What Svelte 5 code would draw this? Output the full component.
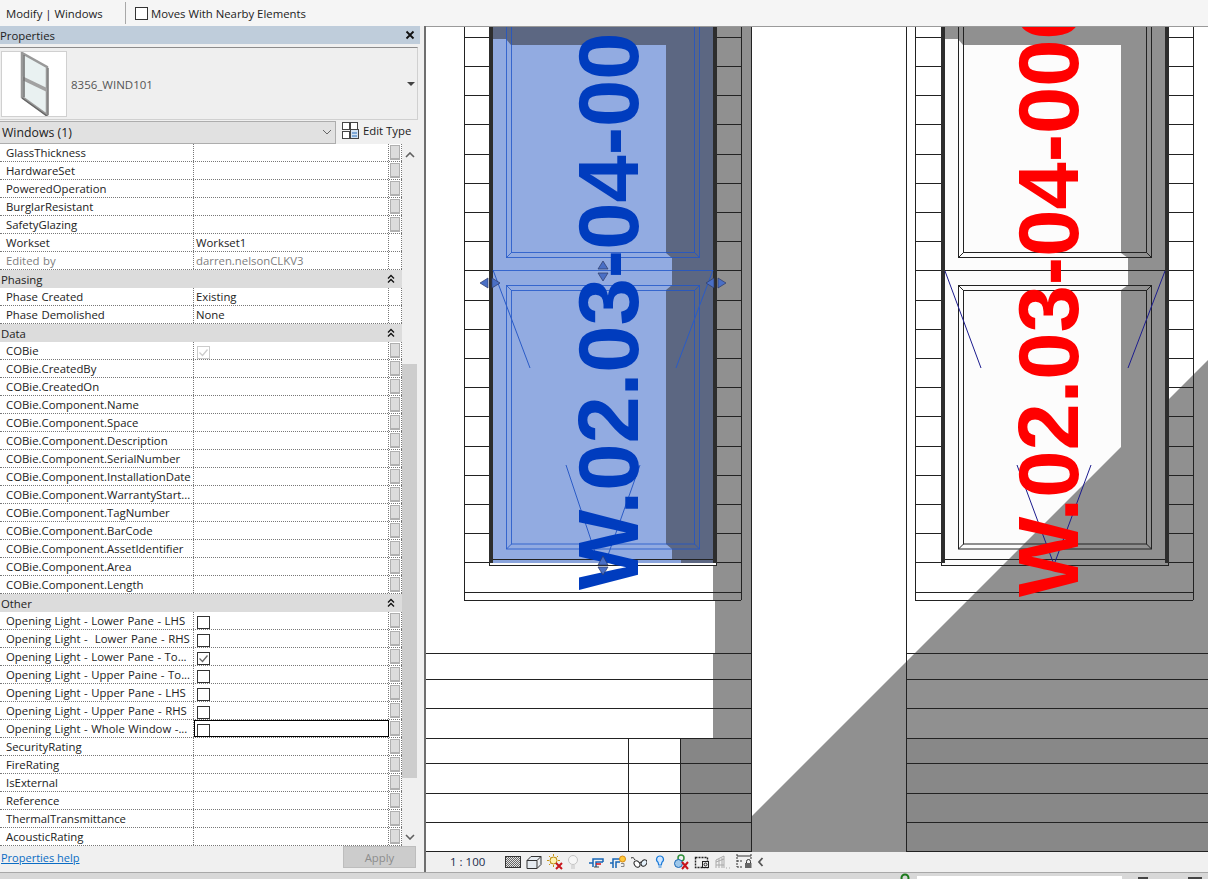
<script>
  const headers = (label) => ({ kind: 'header', label });
  const btn = (label, extra = {}) => ({ kind: 'row', label, btn: true, ...extra });
  const plain = (label, value, muted = false) => ({ kind: 'row', label, value, muted });

  const rows = [
    btn('GlassThickness'),
    btn('HardwareSet'),
    btn('PoweredOperation'),
    btn('BurglarResistant'),
    btn('SafetyGlazing'),
    plain('Workset', 'Workset1'),
    plain('Edited by', 'darren.nelsonCLKV3', true),
    headers('Phasing'),
    plain('Phase Created', 'Existing'),
    plain('Phase Demolished', 'None'),
    headers('Data'),
    btn('COBie', { check: 'disabled' }),
    btn('COBie.CreatedBy'),
    btn('COBie.CreatedOn'),
    btn('COBie.Component.Name'),
    btn('COBie.Component.Space'),
    btn('COBie.Component.Description'),
    btn('COBie.Component.SerialNumber'),
    btn('COBie.Component.InstallationDate'),
    btn('COBie.Component.WarrantyStart...'),
    btn('COBie.Component.TagNumber'),
    btn('COBie.Component.BarCode'),
    btn('COBie.Component.AssetIdentifier'),
    btn('COBie.Component.Area'),
    btn('COBie.Component.Length'),
    headers('Other'),
    btn('Opening Light - Lower Pane - LHS', { check: 'off' }),
    btn('Opening Light -  Lower Pane - RHS', { check: 'off' }),
    btn('Opening Light - Lower Pane - To...', { check: 'on' }),
    btn('Opening Light - Upper Paine - To...', { check: 'off' }),
    btn('Opening Light - Upper Pane - LHS', { check: 'off' }),
    btn('Opening Light - Upper Pane - RHS', { check: 'off' }),
    btn('Opening Light - Whole Window -...', { check: 'off', active: true }),
    btn('SecurityRating'),
    btn('FireRating'),
    btn('IsExternal'),
    btn('Reference'),
    btn('ThermalTransmittance'),
    btn('AcousticRating')
  ];

  const courses = [37, 66, 95, 124, 154, 183, 212, 241, 270, 300, 329, 358, 387, 416, 446, 475, 504, 533, 562];
  const wallLines = [653, 679, 708, 738, 763, 793, 822, 851];

  const leftWin = {
    wall: [464, 741], frame: [489, 713], dx: 0, shade: [666, 672],
    glass: '#92abe1', dark: '#5c6782', line: '#1f55c8', lineOpacity: 0.8,
    sillFill: '#8aa4dc', sillShade: 681
  };
  const rightWin = {
    wall: [915, 1193], frame: [941, 1165], dx: 452, shade: [1121, 1128],
    glass: '#fcfcfc', dark: '#909090', line: '#222', lineOpacity: 1,
    sillFill: '#fcfcfc', sillShade: null
  };

  const lightShape = (w) => {
    const o = w.frame[0] + 4;
    const [a, b] = w.shade;
    return [[o, 39], [o + 13, 39], [o + 18, 45], [a, 45], [a, 253], [b, 258], [b, 285], [a, 290], [a, 544], [b, 549], [b, 559], [o, 559]]
      .map((p) => p.join(',')).join(' ');
  };
</script>

{#snippet windowFill(w)}
  <rect x={w.frame[0] + 4} y="0" width={w.frame[1] - w.frame[0] - 4} height="560" fill={w.dark} />
  <polygon points={lightShape(w)} fill={w.glass} />
  <rect x={w.frame[0] + 1} y="559" width={w.frame[1] - w.frame[0] + 2} height="7" fill="#fcfcfc" />
  <rect x={w.frame[0] + 2} y="559" width={w.frame[1] - w.frame[0]} height="4" fill={w.sillFill} />
  {#if w.sillShade}
    <rect x={w.sillShade} y="559" width={w.frame[1] + 2 - w.sillShade} height="4" fill={w.dark} />
  {/if}
{/snippet}

{#snippet windowInk(w)}
  <g class="ink">
    {#each courses as y}
      <line x1={w.wall[0]} x2={w.frame[0]} y1={y + 0.5} y2={y + 0.5} />
      <line x1={w.frame[1] + 4} x2={w.wall[1]} y1={y + 0.5} y2={y + 0.5} />
    {/each}
    <line x1={w.wall[0] + 0.5} x2={w.wall[0] + 0.5} y1="0" y2="600" />
    <line x1={w.wall[1] + 0.5} x2={w.wall[1] + 0.5} y1="0" y2="600" />
    <line x1={w.wall[0]} x2={w.wall[1]} y1="592.5" y2="592.5" />
    <line x1={w.wall[0]} x2={w.wall[1]} y1="600.5" y2="600.5" />
    <rect class="box" x={w.frame[0] + 0.5} y="559.5" width={w.frame[1] - w.frame[0] + 3} height="6" />
  </g>
  <rect x={w.frame[0]} y="0" width="4" height="563" fill="#2d2d2d" />
  <rect x={w.frame[1]} y="0" width="4" height="563" fill="#2d2d2d" />

  <g class="sash" style="stroke: {w.line}; stroke-opacity: {w.lineOpacity}">
    <line x1={w.frame[0] + 4} x2={w.frame[1]} y1="270.5" y2="270.5" />
    <rect x={506.5 + w.dx} y="-10" width="193" height="267.5" />
    <rect x={511.5 + w.dx} y="-10" width="183" height="262.5" />
    <rect x={506.5 + w.dx} y="285.5" width="193" height="263.5" />
    <rect x={511.5 + w.dx} y="290.5" width="183" height="253.5" />
    <path d="M{506.5 + w.dx} 257.5l5-5M{699.5 + w.dx} 257.5l-5-5M{506.5 + w.dx} 285.5l5 5M{699.5 + w.dx} 285.5l-5 5M{506.5 + w.dx} 549l5-5M{699.5 + w.dx} 549l-5-5" />
  </g>
{/snippet}

<div class="app">
  <header class="toolbar">
    <span class="mode">Modify | Windows</span>
    <span class="sep"></span>
    <span class="tool-check"></span>
    <span>Moves With Nearby Elements</span>
  </header>

  <div class="main">
    <aside class="panel">
      <div class="panel-body">
        <div class="title">
          <span>Properties</span>
          <svg width="10" height="10" viewBox="0 0 10 10"><path d="M1.5 1.5l7 7M8.5 1.5l-7 7" stroke="#111" stroke-width="1.8" /></svg>
        </div>
        <div class="type-box">
          <div class="thumb">
            <svg width="64" height="64" viewBox="0 0 64 64">
              <polygon points="20,1 45,15 45,63 20,45" fill="#e9f1f1" stroke="#999" stroke-width="2.5" />
              <polygon points="20,24 45,36 45,40 20,28" fill="#a2a2a2" />
              <path d="M22 3v42" stroke="#6e6e6e" stroke-width="1.5" />
              <path d="M46 16v47" stroke="#808080" stroke-width="1.5" />
              <path d="M20 46l25 18" stroke="#666" stroke-width="1.5" />
            </svg>
          </div>
          <span class="type-name">8356_WIND101</span>
          <span class="type-arrow"></span>
        </div>
        <div class="filter">
          <div class="select">
            <span>Windows (1)</span>
            <svg width="10" height="6" viewBox="0 0 10 6"><path d="M1 1l4 4 4-4" fill="none" stroke="#666" /></svg>
          </div>
          <div class="edit-type">
            <svg width="17" height="17" viewBox="0 0 17 17">
              <rect x="0.5" y="0.5" width="7" height="7" fill="#fff" stroke="#444" />
              <rect x="8.5" y="0.5" width="7" height="7" fill="#fff" stroke="#444" />
              <rect x="0.5" y="9.5" width="7" height="7" fill="#fff" stroke="#444" />
              <rect x="8.5" y="7.5" width="8" height="9" fill="#d5e4f3" stroke="#444" />
              <path d="M10 11h5M10 14h5" stroke="#2a6ebb" />
            </svg>
            <span>Edit Type</span>
          </div>
        </div>

        <div class="grid-wrap">
          <div class="grid">
            {#each rows as r}
              {#if r.kind === 'header'}
                <div class="group">
                  <span>{r.label}</span>
                  <svg width="8" height="10" viewBox="0 0 8 10"><path d="M1 4.5l3-3 3 3M1 8.5l3-3 3 3" fill="none" stroke="#111" stroke-width="1.3" /></svg>
                </div>
              {:else}
                <div class="row">
                  <div class="cell label" class:muted={r.muted}>{r.label}</div>
                  <div class="cell value" class:muted={r.muted} class:active={r.active}>
                    {#if r.check}
                      <span class="check {r.check}">
                        {#if r.check !== 'off'}
                          <svg width="11" height="11" viewBox="0 0 11 11"><path d="M1.5 5.5l3 3 5-6" fill="none" stroke={r.check === 'on' ? '#666' : '#ccc'} stroke-width="1.3" /></svg>
                        {/if}
                      </span>
                    {:else if r.value}{r.value}{/if}
                  </div>
                  <div class="cell more">
                    {#if r.btn}<span class="more-btn"></span>{/if}
                  </div>
                </div>
              {/if}
            {/each}
          </div>
          <div class="scrollbar">
            <svg class="arrow-up" width="10" height="6" viewBox="0 0 10 6"><path d="M1 5l4-4 4 4" fill="none" stroke="#606060" stroke-width="1.6" /></svg>
            <div class="scroll-thumb"></div>
            <svg class="arrow-down" width="10" height="6" viewBox="0 0 10 6"><path d="M1 1l4 4 4-4" fill="none" stroke="#606060" stroke-width="1.6" /></svg>
          </div>
        </div>

        <div class="panel-foot">
          <span class="help">Properties help</span>
          <span class="apply">Apply</span>
        </div>
      </div>
    </aside>

    <section class="view">
      <svg class="drawing" width="782" height="825" viewBox="426 27 782 825">
        <rect x="426" y="27" width="782" height="825" fill="#fff" />

        <!-- cast shadows -->
        <rect x="717" y="0" width="35" height="566" fill="#909090" />
        <polygon points="713,566 752,566 752,653 715,653 715,600 713,600" fill="#909090" />
        <rect x="713" y="653" width="39" height="85" fill="#909090" />
        <rect x="681" y="738" width="71" height="114" fill="#868686" />

        {@render windowFill(leftWin)}
        {@render windowFill(rightWin)}

        <!-- diagonal shadow falls across the right window -->
        <polygon points="1208,360 752,816 752,852 1208,852" fill="#909090" />
        <rect x="907" y="738" width="301" height="114" fill="#888888" />

        {@render windowInk(leftWin)}
        {@render windowInk(rightWin)}

        <g class="ink">
          {#each wallLines as y}
            <line x1="426" x2="752" y1={y + 0.5} y2={y + 0.5} />
            <line x1="907" x2="1208" y1={y + 0.5} y2={y + 0.5} />
          {/each}
          <line x1="751.5" x2="751.5" y1="0" y2="852" />
          <line x1="906.5" x2="906.5" y1="0" y2="852" />
          <line x1="628.5" x2="628.5" y1="738" y2="852" />
          <line x1="680.5" x2="680.5" y1="738" y2="852" />
        </g>

        <path class="swing-left" d="M493 270L530 368M713 270L676 368M566 465L597 558M640 465L607 558" />
        <path class="swing-right" d="M945 271L981 368M1165 271L1128 368M1017 465L1053 562M1091 465L1055 562" />

        <text class="tag tag-blue" transform="translate(638,590) rotate(-90)">W.02.03-04-00</text>
        <text class="tag tag-red" transform="translate(1078,597) rotate(-90)">W.02.03-04-000</text>

        <g class="grips">
          <polygon points="488,278 488,288 480,283" />
          <polygon points="492,278 492,288 500,283" />
          <polygon points="714,278 714,288 706,283" />
          <polygon points="718,278 718,288 726,283" />
          <polygon points="598,269 608,269 603,261" />
          <polygon points="598,273 608,273 603,281" />
          <polygon points="598,565 608,565 603,556" />
          <polygon points="598,567 608,567 603,575" />
        </g>
      </svg>

      <footer class="viewbar">
        <span class="scale">1 : 100</span>
        <div class="icons">
          <svg width="16" height="16" viewBox="0 0 16 16">
            <defs><pattern id="dots" width="2" height="2" patternUnits="userSpaceOnUse"><rect width="2" height="2" fill="#e4e4e4" /><rect width="1" height="1" fill="#666" /><rect x="1" y="1" width="1" height="1" fill="#666" /></pattern></defs>
            <rect x="0.5" y="2.5" width="15" height="11" fill="url(#dots)" stroke="#333" />
          </svg>
          <svg width="16" height="16" viewBox="0 0 16 16"><path d="M1 6.5h10v8H1zM1 6.5l4-4h10l-4 4M11 14.5l4-4v-8" fill="#e6ebf0" stroke="#333" /></svg>
          <svg width="16" height="16" viewBox="0 0 16 16">
            <circle cx="6.5" cy="6.5" r="3.5" fill="#fff2b0" stroke="#b8860b" />
            <path d="M6.5 0v2M6.5 11v2M0 6.5h2M11 6.5h2M2 2l1.4 1.4M9.6 9.6L11 11M11 2L9.6 3.4M2 11l1.4-1.4" stroke="#c8940f" />
            <path d="M9 9l6 6M15 9l-6 6" stroke="#c8141c" stroke-width="2" />
          </svg>
          <svg width="16" height="16" viewBox="0 0 16 16"><circle cx="5" cy="6" r="4.5" fill="#f6f6f6" stroke="#c4c4c4" /><path d="M3 12h4M3 14h4" stroke="#c4c4c4" /></svg>
          <svg width="16" height="16" viewBox="0 0 16 16">
            <path d="M0 9h4M4 13V5h10v3M7 13V8h7" fill="none" stroke="#1766b5" stroke-width="1.5" />
            <path d="M7 10h5" stroke="#d8141c" stroke-width="1.5" />
            <path d="M5 13h5" stroke="#444" />
          </svg>
          <svg width="16" height="16" viewBox="0 0 16 16">
            <path d="M0 9h3M3 14V5h8M6 14V8h4" fill="none" stroke="#1766b5" stroke-width="1.5" />
            <circle cx="12.5" cy="5" r="3" fill="#ffc83a" stroke="#d68a10" />
            <path d="M11 9.5h3v3h-3" stroke="#888" fill="none" />
          </svg>
          <svg width="16" height="16" viewBox="0 0 16 16" fill="none" stroke="#222">
            <path d="M0 4c2-1 3 0 4 2" />
            <ellipse cx="6" cy="10" rx="2.6" ry="3.4" transform="rotate(-35 6 10)" fill="#fff" />
            <ellipse cx="13" cy="9" rx="2.6" ry="3.4" transform="rotate(35 13 9)" fill="#e4f1fb" />
            <path d="M8.5 8.5l2-.5" />
          </svg>
          <svg width="16" height="16" viewBox="0 0 16 16"><path d="M8 2a3.4 3.4 0 0 1 2 6.2L9.3 11H6.7L6 8.2A3.4 3.4 0 0 1 8 2z" fill="#cfe6ff" stroke="#1a7ad8" stroke-width="1.2" /><path d="M6.5 13h3" stroke="#1a7ad8" /></svg>
          <svg width="16" height="16" viewBox="0 0 16 16">
            <circle cx="8" cy="4" r="3" fill="none" stroke="#2f8f3a" stroke-width="1.5" />
            <circle cx="5.5" cy="9.5" r="4" fill="#9fc8ea" stroke="#1766b5" />
            <path d="M9 8l6 7M15 8l-6 7" stroke="#c8141c" stroke-width="2" />
          </svg>
          <svg width="16" height="16" viewBox="0 0 16 16" fill="none" stroke="#222">
            <rect x="1.5" y="3.5" width="12" height="10" stroke-dasharray="2 1" stroke-width="1.4" />
            <rect x="8.5" y="7.5" width="6" height="6" fill="#f0f0f0" />
            <circle cx="11.5" cy="10.5" r="1.5" />
          </svg>
          <svg width="16" height="16" viewBox="0 0 16 16" fill="none" stroke="#a9a9a9">
            <path d="M1 14V6l8-4v12M1 8l8-3M1 11h8M4 5v9M7 4v10" />
            <path d="M11 14h1M14 14h1" />
          </svg>
          <svg width="16" height="16" viewBox="0 0 16 16" fill="none" stroke="#333">
            <path d="M1 0v13M15 0v6M1 7h5M1 13h6" stroke-dasharray="2 1" />
            <path d="M1 2h14" />
            <rect x="9" y="9" width="6.5" height="5" fill="#666" stroke="none" />
            <path d="M10.5 9V7.5a2 2 0 0 1 4 0V9" />
          </svg>
          <svg width="7" height="10" viewBox="0 0 7 10"><path d="M5.5 1L2 5l3.5 4" fill="none" stroke="#555" stroke-width="1.8" /></svg>
        </div>
      </footer>
    </section>
  </div>

  <div class="status">
    <svg class="status-dot" width="10" height="6" viewBox="0 0 10 6"><circle cx="5" cy="5" r="3.5" fill="none" stroke="#1c7a1c" stroke-width="2" /></svg>
    <span class="status-field"></span>
    <span class="status-tick"></span>
    <span class="status-tick wide"></span>
  </div>
</div>

<style>
  :global(body) {
    margin: 0;
    background: #f0f0f0;
  }

  .app {
    width: 1208px;
    height: 879px;
    overflow: hidden;
    display: flex;
    flex-direction: column;
    font-family: "Open Sans", "Liberation Sans", sans-serif;
    font-size: 11.35px;
    color: #222;
  }

  .toolbar {
    height: 26px;
    flex: none;
    display: flex;
    align-items: center;
    background: #f5f5f5;
    padding-left: 6px;
    box-sizing: border-box;
  }
  .mode { width: 119px; }
  .sep {
    width: 1px;
    height: 22px;
    background: #a8a8a8;
    margin-right: 9px;
  }
  .tool-check {
    width: 11px;
    height: 11px;
    border: 1px solid #333;
    background: #fff;
    margin-right: 3px;
  }

  .main {
    display: flex;
    height: 846px;
    flex: none;
  }

  .panel {
    width: 426px;
    flex: none;
    box-sizing: border-box;
    padding-right: 4px;
    border-right: 2px solid #6f6f6f;
    background: #f0f0f0;
  }
  .panel-body {
    width: 420px;
  }
  .title {
    height: 18px;
    background: #bfcddb;
    display: flex;
    align-items: center;
    justify-content: space-between;
    padding-right: 5px;
  }
  .type-box {
    width: 418px;
    box-sizing: border-box;
    margin-top: 3px;
    border-top: 1px solid #8c8c8c;
    border-bottom: 1px solid #d0d0d0;
    border-right: 1px solid #d0d0d0;
    height: 73px;
    display: flex;
    align-items: center;
    background: #efefef;
  }
  .thumb {
    width: 64px;
    height: 64px;
    margin-left: 1px;
    background: #fff;
    border: 1px solid #d0d0d0;
    flex: none;
  }
  .type-name {
    margin: 2px 0 0 4px;
    font-size: 11.5px;
    color: #555;
  }
  .type-arrow {
    margin-left: auto;
    margin-right: 2px;
    width: 0;
    height: 0;
    border-left: 4px solid transparent;
    border-right: 4px solid transparent;
    border-top: 4px solid #444;
  }
  .filter {
    display: flex;
    align-items: center;
    height: 24px;
    box-sizing: border-box;
  }
  .select {
    width: 336px;
    height: 23px;
    box-sizing: border-box;
    background: #e1e1e1;
    border: 1px solid #adadad;
    border-left: none;
    display: flex;
    align-items: center;
    justify-content: space-between;
    padding: 0 3px 0 2px;
    font-size: 12.3px;
  }
  .edit-type {
    display: flex;
    align-items: center;
    gap: 4px;
    margin-left: 6px;
    margin-top: -3px;
  }

  .grid-wrap {
    display: flex;
    height: 702px;
    overflow: hidden;
  }
  .grid {
    width: 402px;
    flex: none;
    background: #fff;
  }
  .group {
    height: 18px;
    background: #dcdcdc;
    padding: 0 7px 0 1px;
    display: flex;
    align-items: center;
    justify-content: space-between;
  }
  .row {
    height: 18px;
    box-sizing: border-box;
    display: grid;
    grid-template-columns: 194px 195px 13px;
    border-bottom: 1px dotted #777;
  }
  .cell {
    box-sizing: border-box;
    border-right: 1px dotted #777;
    white-space: pre;
    overflow: hidden;
    display: flex;
    align-items: center;
  }
  .label {
    padding-left: 6px;
    word-spacing: 0.6px;
  }
  .value {
    padding-left: 2px;
  }
  .muted {
    color: #808080;
  }
  .active {
    outline: 1px solid #000;
    outline-offset: -1px;
    border-right: none;
  }
  .more {
    justify-content: center;
  }
  .more-btn {
    width: 10px;
    height: 15px;
    box-sizing: border-box;
    background: #dcdcdc;
    border: 1px solid #b0b0b0;
    border-bottom-width: 2px;
  }
  .check {
    width: 13px;
    height: 13px;
    box-sizing: border-box;
    border: 1px solid #333;
    background: #fff;
    margin: 3px 0 0 1px;
    display: flex;
    align-items: center;
    justify-content: center;
  }
  .check.disabled {
    border-color: #ccc;
  }
  .scrollbar {
    flex: 1;
    position: relative;
    background: #f0f0f0;
  }
  .scroll-thumb {
    position: absolute;
    top: 220px;
    left: 0;
    width: 15px;
    height: 414px;
    background: #cdcdcd;
  }
  .arrow-up {
    position: absolute;
    left: 3px;
    top: 8px;
  }
  .arrow-down {
    position: absolute;
    left: 3px;
    top: 690px;
  }
  .panel-foot {
    display: flex;
    align-items: center;
    justify-content: space-between;
    height: 26px;
    padding: 0 4px 4px 1px;
    box-sizing: border-box;
  }
  .help {
    color: #0a6cc4;
    text-decoration: underline;
    font-size: 11px;
  }
  .apply {
    width: 73px;
    height: 22px;
    box-sizing: border-box;
    background: #cccccc;
    border: 1px solid #bdbdbd;
    color: #8c8c8c;
    display: flex;
    align-items: center;
    justify-content: center;
  }

  .view {
    flex: 1;
    border-top: 1px solid #9a9a9a;
    display: flex;
    flex-direction: column;
    min-width: 0;
  }
  .drawing {
    display: block;
    flex: none;
  }
  .ink {
    stroke: #222;
    stroke-width: 1;
  }
  .box {
    fill: none;
  }
  .sash {
    fill: none;
    stroke-width: 1;
  }
  .swing-left {
    fill: none;
    stroke: #2a5bc6;
  }
  .swing-right {
    fill: none;
    stroke: #1c1c8e;
  }
  .tag {
    font-family: "Liberation Sans", Arial, sans-serif;
    font-weight: 700;
    font-size: 85px;
  }
  .tag-blue { fill: #003cbe; }
  .tag-red { fill: #ff0000; }
  .grips polygon {
    fill: #4a6fc5;
    stroke: #2c3a66;
    stroke-width: 0.7;
  }

  .viewbar {
    height: 19px;
    flex: none;
    background: #f0f0f0;
    display: flex;
    align-items: center;
    padding-left: 24px;
  }
  .scale {
    width: 55px;
    color: #1a2a4a;
    font-size: 11.5px;
  }
  .icons {
    display: flex;
    align-items: center;
    gap: 5px;
  }

  .status {
    height: 7px;
    flex: none;
    box-sizing: border-box;
    border-top: 1px solid #a8a8a8;
    background: #d8d8d8;
    display: flex;
    align-items: flex-end;
    overflow: hidden;
  }
  .status-dot {
    margin-left: 900px;
  }
  .status-field {
    width: 205px;
    height: 3px;
    background: #fff;
    margin-left: 7px;
  }
  .status-tick {
    width: 10px;
    height: 2px;
    background: #444;
    margin-left: 16px;
  }
  .status-tick.wide {
    width: 14px;
    margin-left: 40px;
  }
</style>
